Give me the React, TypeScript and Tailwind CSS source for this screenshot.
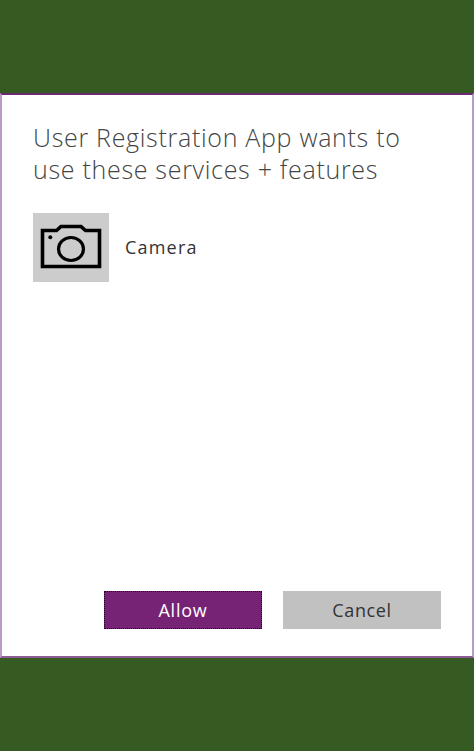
import React from 'react';

// box is 76x69, viewBox lines up with it so the strokes can be read off the screenshot
function CameraIcon() {
  return (
    <svg width="76" height="69" viewBox="0 0 76 69" fill="none" className="block">
      <path d="M9.5 17.5H23.5L28 13.5H48L52.5 17.5H66.5V53.5H9.5Z" stroke="#000" strokeWidth="3.6" />
      <ellipse cx="38" cy="36" rx="12.5" ry="11.5" stroke="#000" strokeWidth="3.2" />
      <circle cx="17.3" cy="24.3" r="2" fill="#000" />
    </svg>
  );
}

export default function App() {
  return (
    <div className="h-[751px] w-[474px] flex flex-col bg-[#355a22] font-['Open_Sans','Liberation_Sans',sans-serif] overflow-hidden">
      <div className="h-[93px] shrink-0 bg-[#355a22]" />

      <div className="h-[565px] shrink-0 flex flex-col bg-white border-x-2 border-x-[#b99cc5] border-t-2 border-t-[#6a2c70] border-b-2 border-b-[#8d5a94] px-[31px]">
        <h1 className="mt-[26px] text-[25px] leading-[32px] font-light text-[#444] tracking-[0.7px]">
          User Registration App wants to
          <br />
          use these services + features
        </h1>

        <div className="mt-[28px] flex items-center gap-[16px]">
          <div className="w-[76px] h-[69px] bg-[#cccccc]">
            <CameraIcon />
          </div>
          <span className="text-[18px] text-[#333] tracking-[1.2px]">Camera</span>
        </div>

        <div className="mt-auto mb-[27px] flex justify-end gap-[21px]">
          <button className="w-[158px] h-[38px] bg-[#762375] border border-dotted border-[#1c0a1c] text-white text-[18px] tracking-[0.8px] flex items-center justify-center">
            Allow
          </button>
          <button className="w-[158px] h-[38px] bg-[#c1c1c1] text-[#333] text-[18px] tracking-[0.6px] flex items-center justify-center">
            Cancel
          </button>
        </div>
      </div>

      <div className="flex-1 bg-[#355a22]" />
    </div>
  );
}
